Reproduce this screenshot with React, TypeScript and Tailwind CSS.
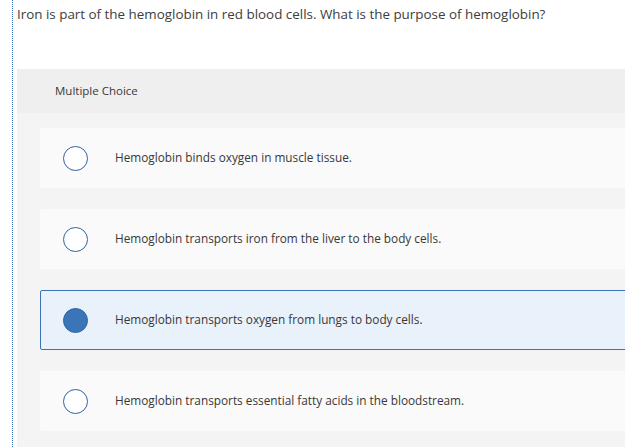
const OPTIONS = [
  { text: 'Hemoglobin binds oxygen in muscle tissue.', selected: false },
  { text: 'Hemoglobin transports iron from the liver to the body cells.', selected: false },
  { text: 'Hemoglobin transports oxygen from lungs to body cells.', selected: true },
  { text: 'Hemoglobin transports essential fatty acids in the bloodstream.', selected: false },
];

function Radio({ checked }: { checked: boolean }) {
  return (
    <span
      className={
        checked
          ? 'block w-[25px] h-[25px] shrink-0 rounded-full bg-[#3a75b7] border border-[#2f64a3]'
          : 'block w-[25px] h-[25px] shrink-0 rounded-full bg-white border-[1.5px] border-[#2f62a0]'
      }
    />
  );
}

export default function App() {
  return (
    <div
      className="w-[625px] h-[447px] overflow-hidden bg-white pl-[12px]"
      style={{ fontFamily: '"Open Sans", sans-serif' }}
    >
      <div className="h-full border-l border-dotted border-[#3b6fb6] pl-[4px] flex flex-col">
        <p className="pt-[5px] h-[69px] text-[13.4px] leading-[18px] text-[#3d3d3d]">
          Iron is part of the hemoglobin in red blood cells. What is the purpose of hemoglobin?
        </p>
        <div className="flex-1 w-[640px] bg-[#f4f4f4] flex flex-col">
          <div className="h-[44px] bg-[#efefef] flex items-center pl-[38px] text-[11.5px] text-[#383838]">
            Multiple Choice
          </div>
          <div className="pl-[23px] pt-[15px] flex flex-col gap-[21px]">
            {OPTIONS.map((o) => (
              <div
                key={o.text}
                className={
                  o.selected
                    ? 'h-[60px] flex items-center pl-[22px] rounded-[2px] bg-[#e9f1fb] border border-[#3d72b4]'
                    : 'h-[60px] flex items-center pl-[23px] rounded-[2px] bg-[#fafafa]'
                }
              >
                <Radio checked={o.selected} />
                <span className="ml-[27px] text-[11.8px] text-[#383838]">{o.text}</span>
              </div>
            ))}
          </div>
        </div>
      </div>
    </div>
  );
}
